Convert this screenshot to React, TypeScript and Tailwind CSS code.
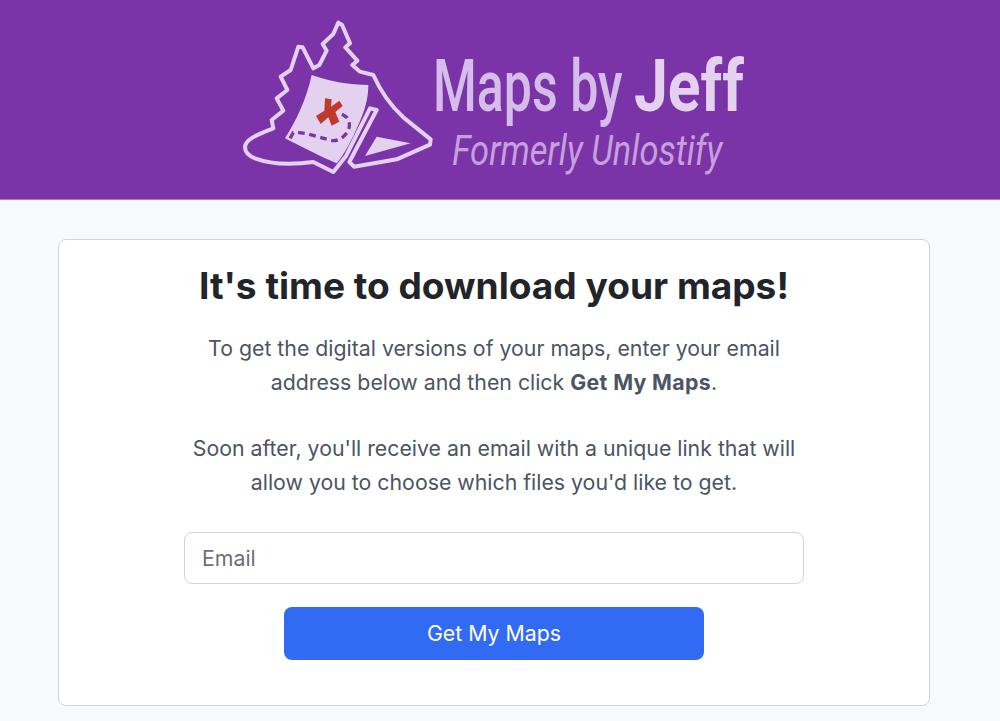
const Logo = () => (
  <svg viewBox="0 0 630 510" className="h-[170px] w-[210px] shrink-0" fill="none">
    <path
      d="M45 410 C48 390 70 378 130 355 L125 330 L160 302 L140 265 L172 240 L152 200 L182 180 L205 110 L218 112 L250 175 L268 165 L290 122 L278 102 L310 72 L325 38 L336 44 L360 100 L346 112 L382 152 L367 165 L390 185 L430 195 C450 240 480 285 520 322 L602 388 L600 404 L500 448 L372 470 L358 456 L440 300 L420 295 L348 438 L310 486 L250 456 C180 465 120 462 75 445 C55 437 44 425 45 410 Z"
      stroke="#e3d1ef"
      strokeWidth="12"
      strokeLinejoin="round"
    />
    <path
      d="M245 195 C300 215 360 225 415 225 C415 265 405 300 385 345 C365 390 345 430 320 460 C270 440 215 410 165 385 C200 330 230 265 245 195 Z"
      fill="#e3d1ef"
    />
    <path d="M440 380 L542 400 L405 438 Z" fill="#e3d1ef" />
    <path
      d="M180 385 L190 368 C230 365 270 385 310 392 C335 392 362 365 358 340 C356 325 348 318 335 312"
      stroke="#7b33a8"
      strokeWidth="10"
      strokeDasharray="20 14"
    />
    <path
      d="M285 265 L305 268 L303 290 L328 272 L338 288 L316 306 L328 335 L305 347 L295 322 L272 342 L258 318 L283 302 Z"
      fill="#c0392f"
    />
  </svg>
);

export default function App() {
  return (
    <div className="min-h-[721px] bg-[#f8f9fa] font-['Inter',sans-serif]">
      <header className="flex h-[200px] items-start justify-center border-b border-[#a877c8] bg-[#7b33a8]">
        <div className="mt-[10px] flex items-start">
          <Logo />
          <div className="ml-[-7px] flex w-[337px] flex-col font-['Roboto',sans-serif]">
            <div className="mt-[33px] flex h-[86px] whitespace-nowrap text-[73px] leading-[86px]">
              <span className="w-[201px] origin-left scale-x-[0.686] font-medium text-[#d6bce8]">Maps by</span>
              <span className="origin-left scale-x-[0.83] font-bold text-[#e3d1ef]">Jeff</span>
            </div>
            <div className="mt-[-3px] ml-[19px] h-[50px] origin-left scale-x-[0.82] whitespace-nowrap text-[42px] italic leading-[50px] text-[#c5a0dc]">
              Formerly Unlostify
            </div>
          </div>
        </div>
      </header>
      <main className="px-[58px] pt-[39px] pb-[15px]">
        <div className="flex h-[467px] w-[872px] flex-col items-center rounded-lg border border-[#d2d4d7] bg-white pt-[22px]">
          <h1 className="text-[37.1px] leading-[48px] font-bold text-[#212529]">
            It's time to download your maps!
          </h1>
          <div className="mt-[22px] text-center text-[21.3px] leading-[33.5px] text-[#4b5563]">
            <p>
              To get the digital versions of your maps, enter your email
              <br />
              address below and then click <strong className="font-bold tracking-[0.35px]">Get My Maps</strong>.
            </p>
            <p className="mt-[33px]">
              Soon after, you'll receive an email with a unique link that will
              <br />
              allow you to choose which files you'd like to get.
            </p>
          </div>
          <input
            type="email"
            placeholder="Email"
            className="mt-[33px] h-[52px] w-[620px] rounded-lg border border-[#ced4da] bg-white px-[17px] text-[21.3px] text-[#495057] placeholder:text-[#6c7074]"
          />
          <button className="mt-[23px] h-[53px] w-[420px] rounded-lg bg-[#316bf3] text-[21.3px] text-white">
            Get My Maps
          </button>
        </div>
      </main>
    </div>
  );
}
